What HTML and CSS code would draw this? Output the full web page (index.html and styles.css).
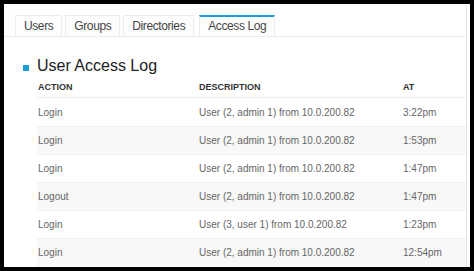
FILE: index.html
```html
<!DOCTYPE html>
<html lang="en">
<head>
    <meta charset="UTF-8">
    <meta name="viewport" content="width=device-width, initial-scale=1.0">
    <title>Access Log</title>
    <link rel="stylesheet" href="styles.css">
</head>
<body>
    <div class="frame">
        <div class="panel">
            <div class="tabs">
                <div class="tab">Users</div>
                <div class="tab">Groups</div>
                <div class="tab">Directories</div>
                <div class="tab active">Access Log</div>
            </div>

            <h2 class="title"><span class="marker"></span>User Access Log</h2>

            <table class="log">
                <thead>
                    <tr>
                        <th class="col-action">Action</th>
                        <th class="col-desc">Description</th>
                        <th>At</th>
                    </tr>
                </thead>
                <tbody>
                    <tr><td>Login</td><td>User (2, admin 1) from 10.0.200.82</td><td>3:22pm</td></tr>
                    <tr><td>Login</td><td>User (2, admin 1) from 10.0.200.82</td><td>1:53pm</td></tr>
                    <tr><td>Login</td><td>User (2, admin 1) from 10.0.200.82</td><td>1:47pm</td></tr>
                    <tr><td>Logout</td><td>User (2, admin 1) from 10.0.200.82</td><td>1:47pm</td></tr>
                    <tr><td>Login</td><td>User (3, user 1) from 10.0.200.82</td><td>1:23pm</td></tr>
                    <tr><td>Login</td><td>User (2, admin 1) from 10.0.200.82</td><td>12:54pm</td></tr>
                </tbody>
            </table>
        </div>
    </div>
</body>
</html>
```

FILE: styles.css
```css
* { margin: 0; padding: 0; box-sizing: border-box; font-family: "Liberation Sans", Arial, sans-serif; }
body { background: #000; }

.frame {
    margin: 4px;
    height: 263px;
    background: #fff;
    padding-right: 3px;
    overflow: hidden;
}

.panel {
    height: 100%;
    border-right: 1px solid #e4e4e4;
}

.tabs {
    display: flex;
    gap: 3px;
    padding: 11px 0 0 11px;
    border-bottom: 1px solid #ececec;
}

.tab {
    height: 21px;
    line-height: 20px;
    padding: 0 8px;
    font-size: 12px;
    letter-spacing: -0.4px;
    color: #444;
    border: 1px solid #ececec;
    border-bottom: none;
    background: #fdfdfd;
}

.tab.active {
    margin-left: 2px;
    background: #fff;
    border-top: 2px solid #1e9ad6;
    line-height: 19px;
}

.title {
    display: flex;
    align-items: center;
    margin: 19px 0 0 19px;
    height: 20px;
    font-size: 16px;
    font-weight: normal;
    color: #222;
}

.marker {
    width: 6px;
    height: 6px;
    background: #1e9ad6;
    margin: 3px 8px 0 0;
}

.log {
    margin-left: 33px;
    width: 429px;
    border-collapse: separate;
    border-spacing: 0;
    text-align: left;
}

.log th {
    height: 22px;
    font-size: 9px;
    font-weight: bold;
    text-transform: uppercase;
    color: #333;
    padding: 0 1px;
    border-bottom: 1px solid #ececec;
}

.col-action { width: 161px; }
.col-desc { width: 204px; }

.log td {
    height: 28px;
    font-size: 10px;
    color: #666;
    padding: 0 1px;
    border-top: 1px solid #f2f2f2;
}

.log tbody tr:first-child td { border-top: none; }
.log tbody tr:nth-child(even) td { background: #f8f8f8; }
```
